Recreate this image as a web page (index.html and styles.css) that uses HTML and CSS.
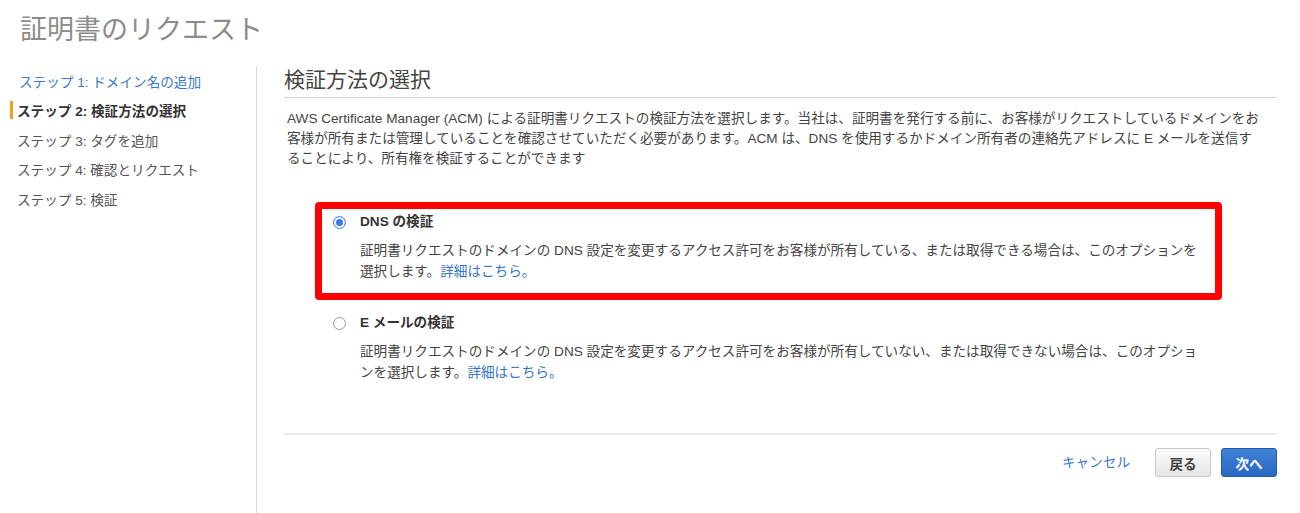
FILE: index.html
```html
<!DOCTYPE html>
<html lang="ja">
<head>
<meta charset="utf-8">
<title>証明書のリクエスト</title>
<link rel="stylesheet" href="styles.css">
</head>
<body>
<h1 class="page-title">証明書のリクエスト</h1>
<div class="layout">
  <nav class="steps">
    <a class="step step-link" href="#">ステップ 1: ドメイン名の追加</a>
    <div class="step step-active">ステップ 2: 検証方法の選択</div>
    <div class="step">ステップ 3: タグを追加</div>
    <div class="step">ステップ 4: 確認とリクエスト</div>
    <div class="step">ステップ 5: 検証</div>
  </nav>
  <main class="content">
    <h2 class="section-title">検証方法の選択</h2>
    <p class="intro">AWS Certificate Manager (ACM) による証明書リクエストの検証方法を選択します。当社は、証明書を発行する前に、お客様がリクエストしているドメインをお客様が所有または管理していることを確認させていただく必要があります。ACM は、DNS を使用するかドメイン所有者の連絡先アドレスに E メールを送信することにより、所有権を検証することができます</p>
    <div class="options">
      <div class="option option-marked">
        <span class="radio radio-on"></span>
        <div class="option-body">
          <div class="option-title">DNS の検証</div>
          <div class="option-desc">証明書リクエストのドメインの DNS 設定を変更するアクセス許可をお客様が所有している、または取得できる場合は、このオプションを選択します。<a class="link" href="#">詳細はこちら。</a></div>
        </div>
      </div>
      <div class="option">
        <span class="radio"></span>
        <div class="option-body">
          <div class="option-title">E メールの検証</div>
          <div class="option-desc">証明書リクエストのドメインの DNS 設定を変更するアクセス許可をお客様が所有していない、または取得できない場合は、このオプションを選択します。<a class="link" href="#">詳細はこちら。</a></div>
        </div>
      </div>
    </div>
    <div class="footer">
      <a class="cancel" href="#">キャンセル</a>
      <button class="btn btn-back">戻る</button>
      <button class="btn btn-next">次へ</button>
    </div>
  </main>
</div>
</body>
</html>
```

FILE: styles.css
```css
* { box-sizing: border-box; }

html, body {
  margin: 0;
  padding: 0;
  background: #fff;
}

body {
  font-family: "Liberation Sans", "Noto Sans CJK JP", sans-serif;
  font-size: 13.6px;
  color: #444;
  width: 1300px;
  height: 513px;
  overflow: hidden;
}

.page-title {
  margin: 0 0 20px 0;
  padding: 14px 0 0 20px;
  height: 46px;
  font-size: 27px;
  line-height: 32px;
  font-weight: normal;
  color: #8c8c8c;
}

.layout {
  display: flex;
  min-height: 447px;
}

.steps {
  width: 257px;
  flex: none;
  border-right: 1px solid #dcdcdc;
  display: flex;
  flex-direction: column;
}

.step {
  display: flex;
  align-items: center;
  height: 29.5px;
  padding-left: 17px;
  color: #555;
  text-decoration: none;
  white-space: nowrap;
}

.step-link {
  padding-left: 19px;
  color: #3a78c9;
}

.step-active {
  padding-left: 0;
  font-weight: bold;
  color: #333;
}

.step-active::before {
  content: "";
  width: 3px;
  height: 18px;
  margin-left: 10px;
  margin-right: 4px;
  background: #f0a020;
}

.content {
  flex: 1;
  padding: 0 23px 0 27px;
}

.section-title {
  margin: 0;
  padding: 0 0 3px 0;
  font-size: 21px;
  line-height: 28px;
  font-weight: normal;
  color: #444;
  border-bottom: 1px solid #d3d3d3;
}

.intro {
  margin: 11px 0 0 0;
  padding: 0 16px 0 3px;
  line-height: 20px;
  color: #444;
}

.options {
  margin: 33px 55px 0 31px;
  display: flex;
  flex-direction: column;
  gap: 3px;
}

.option {
  display: flex;
  align-items: flex-start;
  border: 7px solid transparent;
  border-radius: 4px;
  padding: 3px 10px 11px 11px;
}

.option-marked {
  border-color: #ff0000;
}

.radio {
  flex: none;
  width: 13px;
  height: 13px;
  margin-top: 3.5px;
  margin-right: 14px;
  border-radius: 50%;
  border: 1px solid #9a9a9a;
  background: #fff;
}

.radio-on {
  border: 1.5px solid #5b8ff2;
  background: #3a78f0;
  box-shadow: inset 0 0 0 2px #fff;
}

.option-body {
  flex: 1;
}

.option-title {
  line-height: 20px;
  font-weight: bold;
  color: #333;
}

.option-desc {
  margin-top: 8px;
  line-height: 21px;
  color: #444;
}

.link {
  color: #3374c5;
  text-decoration: none;
}

.footer {
  margin-top: 32px;
  border-top: 2px solid #ebebeb;
  padding-top: 13px;
  display: flex;
  justify-content: flex-end;
  align-items: center;
}

.cancel {
  color: #3a78c9;
  text-decoration: none;
  margin-right: 25px;
  line-height: 20px;
}

.btn {
  font-family: "Liberation Sans", "Noto Sans CJK JP", sans-serif;
  font-size: 13.6px;
  font-weight: bold;
  width: 56px;
  height: 29px;
  border-radius: 3px;
  padding: 0;
  cursor: pointer;
}

.btn-back {
  color: #444;
  background: linear-gradient(#fbfbfb, #e6e6e6);
  border: 1px solid #c8c8c8;
  margin-right: 10px;
}

.btn-next {
  color: #fff;
  background: linear-gradient(#3f82d6, #2a68c2);
  border: 1px solid #2559a8;
}
```
